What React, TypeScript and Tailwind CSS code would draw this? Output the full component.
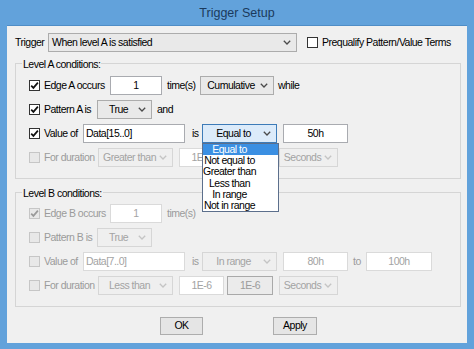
import React from 'react';

const GRAY = 'text-[#9b9b9b]';

function Chevron({ disabled }: { disabled?: boolean }) {
    return (
        <svg width="8" height="5" viewBox="0 0 8 5" className="shrink-0">
            <path
                d="M0.8 0.8 L4 4 L7.2 0.8"
                fill="none"
                stroke={disabled ? '#c4c4c4' : '#4a4a4a'}
                strokeWidth="1.3"
            />
        </svg>
    );
}

function Check({ checked, disabled }: { checked?: boolean; disabled?: boolean }) {
    return (
        <span
            className={`w-[11px] h-[11px] shrink-0 border flex items-center justify-center ${
                disabled ? 'bg-[#e8e8e8] border-[#c6c6c6]' : 'bg-white border-[#333333]'
            }`}
        >
            {checked && (
                <svg width="9" height="9" viewBox="0 0 9 9">
                    <path
                        d="M1.2 4.6 L3.4 6.9 L7.9 1.6"
                        fill="none"
                        stroke={disabled ? '#9a9a9a' : '#111111'}
                        strokeWidth="1.7"
                    />
                </svg>
            )}
        </span>
    );
}

interface SelectProps {
    w: string;
    text: string;
    left?: boolean;
    disabled?: boolean;
    focus?: boolean;
    className?: string;
}

function Select({ w, text, left, disabled, focus, className = '' }: SelectProps) {
    const skin = disabled
        ? 'bg-[#efefef] border-[#d6d6d6] text-[#a3a3a3]'
        : focus
          ? 'bg-[#dcebfa] border-[#3d7bb8] text-black'
          : 'bg-[#e9e9e9] border-[#acacac] text-black';
    return (
        <div className={`${w} h-[19px] shrink-0 border flex items-center pr-[5px] ${skin} ${className}`}>
            <span className={`flex-1 truncate ${left ? 'pl-[3px]' : 'text-center pl-[1px]'}`}>{text}</span>
            <Chevron disabled={disabled} />
        </div>
    );
}

function Input({
    w,
    text,
    left,
    disabled,
    className = ''
}: {
    w: string;
    text: string;
    left?: boolean;
    disabled?: boolean;
    className?: string;
}) {
    return (
        <div
            className={`${w} h-[19px] shrink-0 border bg-white flex items-center ${
                disabled ? 'border-[#dadada] text-[#a3a3a3]' : 'border-[#a9abb0] text-black'
            } ${left ? 'pl-[2px]' : 'justify-center'} ${className}`}
        >
            {text}
        </div>
    );
}

function Row({ children }: { children: React.ReactNode }) {
    return <div className="h-[19px] flex items-center whitespace-nowrap">{children}</div>;
}

function Group({ title, children }: { title: string; children: React.ReactNode }) {
    return (
        <div className="ml-[8px] w-[446px] border border-[#d5d5d5] pb-[11px] pl-[13px]">
            <div className="-mt-[6px] -ml-[7px] w-fit px-[1px] leading-[12px] bg-[#f0f0f0]">{title}</div>
            {children}
        </div>
    );
}

const OPTIONS = ['Equal to', 'Not equal to', 'Greater than', 'Less than', 'In range', 'Not in range'];

export default function App() {
    return (
        <div className="w-[474px] h-[349px] bg-[#62a2db] flex flex-col font-['Liberation_Sans',Arial,sans-serif] text-[10.5px] tracking-[-0.5px] text-black">
            <div className="h-[25px] flex items-center justify-center pt-[1px] text-[12.5px] tracking-normal text-[#1b3a5c]">
                Trigger Setup
            </div>

            <div className="mx-[7px] h-[318px] bg-[#f0f0f0] border-t border-[#4f8dc6]">
                <div className="mt-[7px] h-[19px] pl-[8px] flex items-center whitespace-nowrap">
                    <span className="w-[33px] shrink-0">Trigger</span>
                    <Select w="w-[249px]" text="When level A is satisfied" left />
                    <span className="ml-[10px]">
                        <Check />
                    </span>
                    <span className="ml-[4px]">Prequalify Pattern/Value Terms</span>
                </div>

                <div className="mt-[11px]">
                    <Group title="Level A conditions:">
                        <div className="mt-[6px] flex flex-col gap-[5px]">
                            <Row>
                                <Check checked />
                                <span className="ml-[4px] w-[66px] shrink-0">Edge A occurs</span>
                                <Input w="w-[52px]" text="1" />
                                <span className="w-[38px] pl-[5px] shrink-0">time(s)</span>
                                <Select w="w-[74px]" text="Cumulative" />
                                <span className="ml-[4px]">while</span>
                            </Row>
                            <Row>
                                <Check checked />
                                <span className="ml-[4px] w-[53px] shrink-0">Pattern A is</span>
                                <Select w="w-[55px]" text="True" />
                                <span className="ml-[5px]">and</span>
                            </Row>
                            <Row>
                                <Check checked />
                                <span className="ml-[4px] w-[39px] shrink-0">Value of</span>
                                <Input w="w-[102px]" text="Data[15..0]" left />
                                <span className="w-[17px] pl-[7px] shrink-0">is</span>
                                <div className="relative shrink-0">
                                    <Select w="w-[75px]" text="Equal to" focus />
                                    <div className="absolute z-10 top-full left-0 w-[77px] h-[69px] bg-white border border-[#5c6f8c] text-black">
                                        {OPTIONS.map((o, i) => (
                                            <div
                                                key={o}
                                                className={`h-[11.2px] leading-[11.2px] text-center pr-[22px] ${
                                                    i === 0 ? 'bg-[#3b8fe2] text-white' : ''
                                                }`}
                                            >
                                                {o}
                                            </div>
                                        ))}
                                    </div>
                                </div>
                                <Input w="w-[65px]" text="50h" className="ml-[6px]" />
                            </Row>
                            <Row>
                                <Check disabled />
                                <span className={`ml-[4px] w-[54px] shrink-0 ${GRAY}`}>For duration</span>
                                <Select w="w-[75px]" text="Greater than" disabled />
                                <Input w="w-[45px]" text="1E-6" disabled className="ml-[6px]" />
                                <div className="ml-[3px] w-[46px] h-[19px] shrink-0 border border-[#a9a9a9] bg-[#ebebeb] flex items-center justify-center text-[#a3a3a3]">
                                    1E-6
                                </div>
                                <Select w="w-[59px]" text="Seconds" disabled className="ml-[6px]" />
                            </Row>
                        </div>
                    </Group>
                </div>

                <div className="mt-[13px]">
                    <Group title="Level B conditions:">
                        <div className={`mt-[5px] flex flex-col gap-[5px] ${GRAY}`}>
                            <Row>
                                <Check checked disabled />
                                <span className="ml-[4px] w-[66px] shrink-0">Edge B occurs</span>
                                <Input w="w-[52px]" text="1" disabled />
                                <span className="w-[38px] pl-[5px] shrink-0">time(s)</span>
                            </Row>
                            <Row>
                                <Check disabled />
                                <span className="ml-[4px] w-[53px] shrink-0">Pattern B is</span>
                                <Select w="w-[55px]" text="True" disabled />
                            </Row>
                            <Row>
                                <Check disabled />
                                <span className="ml-[4px] w-[39px] shrink-0">Value of</span>
                                <Input w="w-[102px]" text="Data[7..0]" left disabled />
                                <span className="w-[17px] pl-[7px] shrink-0">is</span>
                                <Select w="w-[75px]" text="In range" disabled />
                                <Input w="w-[65px]" text="80h" disabled className="ml-[6px]" />
                                <span className="w-[18px] pl-[5px] shrink-0">to</span>
                                <Input w="w-[66px]" text="100h" disabled />
                            </Row>
                            <Row>
                                <Check disabled />
                                <span className="ml-[4px] w-[54px] shrink-0">For duration</span>
                                <Select w="w-[75px]" text="Less than" disabled />
                                <Input w="w-[45px]" text="1E-6" disabled className="ml-[6px]" />
                                <div className="ml-[3px] w-[46px] h-[19px] shrink-0 border border-[#a9a9a9] bg-[#ebebeb] flex items-center justify-center">
                                    1E-6
                                </div>
                                <Select w="w-[59px]" text="Seconds" disabled className="ml-[6px]" />
                            </Row>
                        </div>
                    </Group>
                </div>

                <div className="mt-[10px] pl-[153px] flex gap-[70px]">
                    <button className="w-[43px] h-[18px] border border-[#adadad] bg-[#e5e5e5] flex items-center justify-center">
                        OK
                    </button>
                    <button className="w-[44px] h-[18px] border border-[#adadad] bg-[#e5e5e5] flex items-center justify-center">
                        Apply
                    </button>
                </div>
            </div>
        </div>
    );
}
